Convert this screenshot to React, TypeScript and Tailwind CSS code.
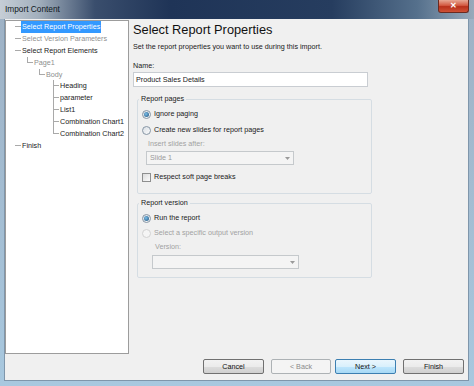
import React from "react";

const font = { fontFamily: '"Liberation Sans", Arial, sans-serif' };

type Node = {
  label: string;
  pad: string;
  kind: "dash" | "elbow" | "tee";
  selected?: boolean;
  disabled?: boolean;
};

const TREE: Node[] = [
  { label: "Select Report Properties", pad: "pl-[9px]", kind: "dash", selected: true },
  { label: "Select Version Parameters", pad: "pl-[9px]", kind: "dash", disabled: true },
  { label: "Select Report Elements", pad: "pl-[9px]", kind: "dash" },
  { label: "Page1", pad: "pl-[21px]", kind: "elbow", disabled: true },
  { label: "Body", pad: "pl-[33px]", kind: "elbow", disabled: true },
  { label: "Heading", pad: "pl-[47px]", kind: "tee" },
  { label: "parameter", pad: "pl-[47px]", kind: "tee" },
  { label: "List1", pad: "pl-[47px]", kind: "tee" },
  { label: "Combination Chart1", pad: "pl-[47px]", kind: "tee" },
  { label: "Combination Chart2", pad: "pl-[47px]", kind: "elbow" },
  { label: "Finish", pad: "pl-[9px]", kind: "dash" },
];

function TreeRow({ node }: { node: Node }) {
  return (
    <div className={`flex items-stretch h-[11.9px] ${node.pad}`}>
      {/* connector lines */}
      <span className="flex flex-col w-[6px] shrink-0">
        <span
          className={
            node.kind === "dash"
              ? "h-1/2 border-b border-[#a9a9a9]"
              : "h-1/2 border-b border-l border-[#a9a9a9]"
          }
        />
        <span className={node.kind === "tee" ? "h-1/2 border-l border-[#a9a9a9]" : "h-1/2"} />
      </span>
      <span
        className={
          node.selected
            ? "flex items-center px-[1px] bg-[#3399ff] text-white"
            : node.disabled
              ? "flex items-center px-[1px] text-[#8f8f8f]"
              : "flex items-center px-[1px] text-[#1a1a1a]"
        }
      >
        {node.label}
      </span>
    </div>
  );
}

function Radio({ checked, disabled }: { checked?: boolean; disabled?: boolean }) {
  return (
    <span
      className={
        disabled
          ? "flex items-center justify-center w-[9px] h-[9px] rounded-full border border-[#d2d2d2] bg-[#f5f5f5] shrink-0"
          : "flex items-center justify-center w-[9px] h-[9px] rounded-full border border-[#8796a5] bg-linear-to-br from-[#d9dfe5] to-[#fbfbfb] shrink-0"
      }
    >
      {checked && (
        <span className="w-[5px] h-[5px] rounded-full bg-[radial-gradient(circle_at_40%_40%,#7cc0ea,#1c4d78)]" />
      )}
    </span>
  );
}

function Arrow() {
  return (
    <svg width="5" height="3" viewBox="0 0 5 3" className="shrink-0">
      <path d="M0 0 L5 0 L2.5 3 Z" fill="#9a9a9a" />
    </svg>
  );
}

function Button({ label, variant }: { label: string; variant: "normal" | "default" | "disabled" }) {
  const cls =
    variant === "default"
      ? "w-[61px] h-[15px] flex items-center justify-center rounded-[2px] border border-[#3c7fb1] bg-[linear-gradient(180deg,#eaf6fd_0%,#d9f0fc_50%,#bee6fd_51%,#a7d9f5_100%)] text-[#111]"
      : variant === "disabled"
        ? "w-[60px] h-[15px] flex items-center justify-center rounded-[2px] border border-[#adb2b5] bg-[#f4f4f4] text-[#8a8a8a]"
        : "w-[61px] h-[15px] flex items-center justify-center rounded-[2px] border border-[#707070] bg-[linear-gradient(180deg,#f2f2f2_0%,#ebebeb_50%,#dddddd_51%,#cfcfcf_100%)] text-[#111]";
  return <div className={cls}>{label}</div>;
}

export default function App() {
  return (
    <div
      className="w-[474px] h-[386px] flex flex-col bg-linear-to-b from-[#9eb1c4] to-[#a8c8df] text-[7.2px] leading-[10px] overflow-hidden"
      style={font}
    >
      {/* Title bar */}
      <div className="h-[19px] shrink-0 flex items-start justify-between bg-[linear-gradient(90deg,#c6ced6_0%,#a3b0bd_8%,#3a4e6d_20%,#1f3457_36%,#263d5f_70%,#55708c_88%,#98aabb_100%)]">
        <span className="mt-[4px] ml-[5px] text-[8.3px] leading-[10px] text-[#101820]">Import Content</span>
        <div className="mr-[5px] w-[31px] h-[13px] flex items-center justify-center rounded-b-[3px] border border-t-0 border-[#6b2a20] bg-[linear-gradient(180deg,#e7a894_0%,#d35a42_45%,#b8301a_55%,#cf5236_100%)] text-white text-[8px] font-bold leading-none">
          ✕
        </div>
      </div>

      {/* Client area */}
      <div className="ml-[4px] mr-[5px] mb-[5px] flex-1 flex flex-col bg-[#f0f0f0] border-l border-r border-b border-[#7f96ab]">
        <div className="flex mt-[1px]">
          {/* Tree */}
          <div className="w-[124px] h-[334px] shrink-0 bg-white border border-[#9c9c9c] flex flex-col">
            {TREE.map((n) => (
              <TreeRow key={n.label} node={n} />
            ))}
          </div>

          {/* Page */}
          <div className="ml-[4px] flex flex-col text-[#1a1a1a]">
            <div className="mt-[2px] h-[16px] text-[12.8px] leading-[16px] text-[#111]">Select Report Properties</div>
            <div className="mt-[4px] h-[10px]">Set the report properties you want to use during this import.</div>
            <div className="mt-[9px] h-[10px]">Name:</div>
            <div className="mt-[1px] w-[235px] h-[15px] flex items-center px-[2px] bg-white border border-[#c9cdd2]">
              Product Sales Details
            </div>

            <fieldset className="ml-[4px] mt-[7px] w-[235px] border border-[#d5dde3] rounded-[2px] pb-[10px] px-0">
              <legend className="ml-[1px] px-[2px] h-[10px]">Report pages</legend>
              <div className="mt-[4px] h-[12px] pl-[4px] flex items-center gap-[3px]">
                <Radio checked />
                <span>Ignore paging</span>
              </div>
              <div className="mt-[4px] h-[12px] pl-[4px] flex items-center gap-[3px]">
                <Radio />
                <span>Create new slides for report pages</span>
              </div>
              <div className="mt-[3px] h-[10px] pl-[10px] text-[#a2a2a2]">Insert slides after:</div>
              <div className="mt-[2px] ml-[8px] w-[148px] h-[14px] flex items-center justify-between px-[3px] bg-[#f4f4f4] border border-[#c5c9cc] text-[#9a9a9a]">
                <span>Slide 1</span>
                <Arrow />
              </div>
              <div className="mt-[6px] h-[12px] pl-[4px] flex items-center gap-[3px]">
                <span className="w-[9px] h-[9px] shrink-0 border border-[#8e8f8f] bg-linear-to-br from-[#dcdcdc] to-[#fbfbfb]" />
                <span>Respect soft page breaks</span>
              </div>
            </fieldset>

            <fieldset className="ml-[4px] mt-[4px] w-[235px] border border-[#d5dde3] rounded-[2px] pb-[8px] px-0">
              <legend className="ml-[1px] px-[2px] h-[10px]">Report version</legend>
              <div className="mt-[4px] h-[12px] pl-[4px] flex items-center gap-[3px]">
                <Radio checked />
                <span>Run the report</span>
              </div>
              <div className="mt-[3px] h-[12px] pl-[4px] flex items-center gap-[3px] text-[#a2a2a2]">
                <Radio disabled />
                <span>Select a specific output version</span>
              </div>
              <div className="mt-[3px] h-[10px] pl-[17px] text-[#a2a2a2]">Version:</div>
              <div className="mt-[3px] ml-[14px] w-[147px] h-[14px] flex items-center justify-end px-[3px] bg-[#f4f4f4] border border-[#c5c9cc]">
                <Arrow />
              </div>
            </fieldset>
          </div>
        </div>

        {/* Buttons */}
        <div className="mt-[5px] flex justify-end pr-[4px]">
          <Button label="Cancel" variant="normal" />
          <div className="ml-[7px]">
            <Button label="< Back" variant="disabled" />
          </div>
          <div className="ml-[4px]">
            <Button label="Next >" variant="default" />
          </div>
          <div className="ml-[7px]">
            <Button label="Finish" variant="normal" />
          </div>
        </div>
      </div>
    </div>
  );
}
